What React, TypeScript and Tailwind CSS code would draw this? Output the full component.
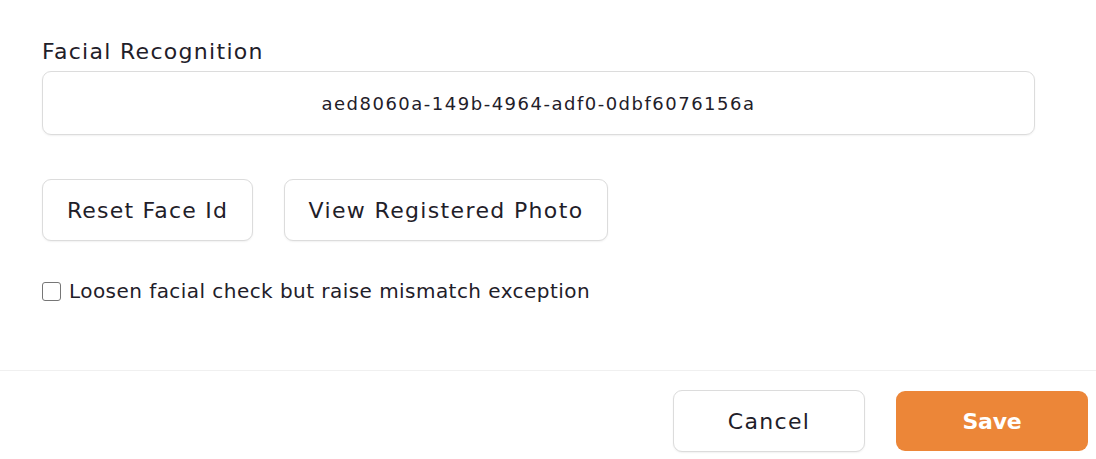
export default function App() {
  return (
    <div className="w-full h-[459px] bg-white flex flex-col text-[#1f2029]" style={{ fontFamily: '"DejaVu Sans", sans-serif' }}>
      {/* Form body */}
      <div className="pl-[42px] pr-[61px] pt-[38px] h-[370px]">
        <div className="text-[22px] leading-[28px] h-[28px] tracking-[1.3px]">Facial Recognition</div>
        <div className="mt-[5px] h-[64px] border border-[#dcdcdc] rounded-[9px] shadow-[0_1px_2px_rgba(0,0,0,0.06)] flex items-center justify-center text-[18px] tracking-[1.5px]">
          aed8060a-149b-4964-adf0-0dbf6076156a
        </div>

        <div className="mt-[44px] flex gap-[31px]">
          <button className="h-[62px] w-[211px] border border-[#dcdcdc] rounded-[9px] shadow-[0_1px_2px_rgba(0,0,0,0.06)] text-[22px] tracking-[1.2px] bg-white">
            Reset Face Id
          </button>
          <button className="h-[62px] w-[324px] border border-[#dcdcdc] rounded-[9px] shadow-[0_1px_2px_rgba(0,0,0,0.06)] text-[22px] tracking-[1.35px] bg-white">
            View Registered Photo
          </button>
        </div>

        <label className="mt-[40px] flex items-center gap-[8px] h-[20px] text-[20px] tracking-[0.45px]">
          <span className="w-[19px] h-[19px] shrink-0 border-[1.5px] border-[#767676] rounded-[3px] bg-white" />
          Loosen facial check but raise mismatch exception
        </label>
      </div>

      {/* Footer */}
      <div className="border-t border-[#f0f0f0] flex justify-end gap-[31px] pt-[19px] pr-[8px]">
        <button className="h-[62px] w-[192px] border border-[#dcdcdc] rounded-[9px] shadow-[0_1px_2px_rgba(0,0,0,0.06)] text-[22px] tracking-[1.3px] bg-white">
          Cancel
        </button>
        <button className="mt-[1px] h-[60px] w-[192px] rounded-[9px] bg-[#ec8638] text-white font-bold text-[22px] tracking-[-0.2px]">
          Save
        </button>
      </div>
    </div>
  );
}
